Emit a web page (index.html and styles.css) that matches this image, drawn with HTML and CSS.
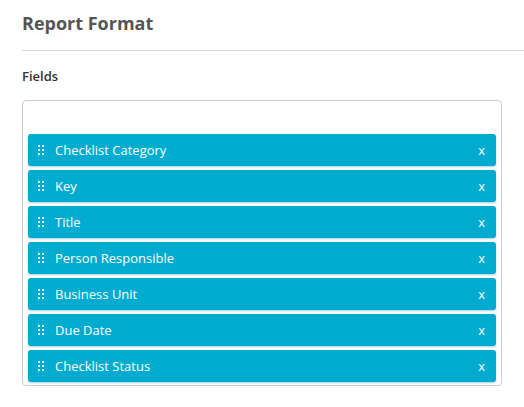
FILE: index.html
```html
<!DOCTYPE html>
<html lang="en">
<head>
    <meta charset="UTF-8">
    <title>Report Format</title>
    <link rel="stylesheet" href="styles.css">
</head>
<body>
    <div class="panel">
        <h2 class="panel-title">Report Format</h2>
        <div class="section">
            <label class="field-label">Fields</label>
            <ul class="field-list">
                <li class="field-item"><span class="grip"></span><span class="field-name">Checklist Category</span><span class="remove">x</span></li>
                <li class="field-item"><span class="grip"></span><span class="field-name">Key</span><span class="remove">x</span></li>
                <li class="field-item"><span class="grip"></span><span class="field-name">Title</span><span class="remove">x</span></li>
                <li class="field-item"><span class="grip"></span><span class="field-name">Person Responsible</span><span class="remove">x</span></li>
                <li class="field-item"><span class="grip"></span><span class="field-name">Business Unit</span><span class="remove">x</span></li>
                <li class="field-item"><span class="grip"></span><span class="field-name">Due Date</span><span class="remove">x</span></li>
                <li class="field-item"><span class="grip"></span><span class="field-name">Checklist Status</span><span class="remove">x</span></li>
            </ul>
        </div>
    </div>
</body>
</html>
```

FILE: styles.css
```css
body {
    margin: 0;
    font-family: "Open Sans", "Liberation Sans", sans-serif;
    background: #fff;
    color: #333;
}

.panel {
    padding: 10px 0 0 22px;
}

.panel-title {
    margin: 0;
    font-size: 18px;
    font-weight: 700;
    line-height: 27px;
    color: #555;
    padding-bottom: 13px;
    border-bottom: 1px solid #d9d9d9;
}

.section {
    padding-top: 16px;
}

.field-label {
    display: block;
    font-size: 13px;
    font-weight: 600;
    line-height: 18px;
    margin-bottom: 15px;
}

.field-list {
    list-style: none;
    margin: 0;
    width: 468px;
    padding: 33px 5px 3px 5px;
    border: 1px solid #ccc;
    border-radius: 4px;
    display: flex;
    flex-direction: column;
    gap: 4px;
}

.field-item {
    display: flex;
    align-items: center;
    height: 32px;
    padding: 0 11px 0 10px;
    background: #00abd0;
    border-radius: 3px;
    box-shadow: 0 1px 2px rgba(0, 120, 150, 0.35);
    color: #fff;
    font-size: 13px;
}

.grip {
    width: 6px;
    height: 10px;
    margin-right: 11px;
    background-image: radial-gradient(circle, #fff 1.2px, transparent 1.4px);
    background-size: 4px 4px;
    background-position: -1px -1px;
}

.field-name {
    flex: 1;
}

.remove {
    font-size: 13px;
}
```
